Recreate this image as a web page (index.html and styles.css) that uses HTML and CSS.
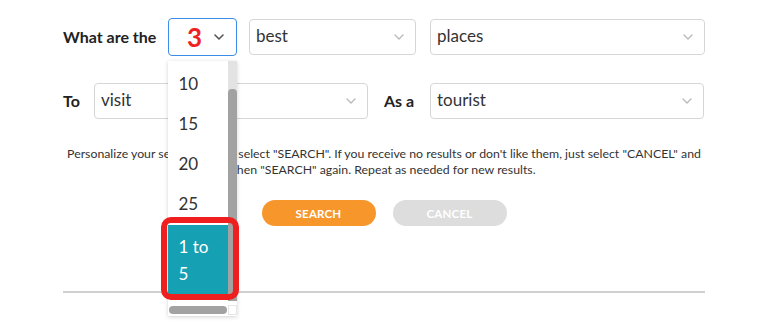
FILE: index.html
```html
<!DOCTYPE html>
<html>
<head>
<meta charset="utf-8">
<link rel="stylesheet" href="styles.css">
</head>
<body>
<div class="page">
  <div class="row row1">
    <span class="label l-what">What are the</span>
    <div class="select sel-num">
      <span class="val num">3</span>
      <svg class="chev dark" width="10" height="6" viewBox="0 0 10 6"><polyline points="1,1 5,5 9,1" fill="none" stroke="currentColor" stroke-width="1.6" stroke-linecap="round" stroke-linejoin="round"/></svg>
      <div class="dropdown">
        <div class="dd-body">
          <ul class="dd-list">
            <li>10</li>
            <li>15</li>
            <li>20</li>
            <li>25</li>
            <li class="selected">1 to 5</li>
          </ul>
          <div class="vscroll"><div class="vthumb"></div></div>
        </div>
        <div class="hscroll"><div class="hthumb"></div><div class="corner"></div></div>
        <div class="highlight"></div>
      </div>
    </div>
    <div class="select sel-best">
      <span class="val">best</span>
      <svg class="chev" width="10" height="6" viewBox="0 0 10 6"><polyline points="1,1 5,5 9,1" fill="none" stroke="currentColor" stroke-width="1.3" stroke-linecap="round" stroke-linejoin="round"/></svg>
    </div>
    <div class="select sel-places">
      <span class="val">places</span>
      <svg class="chev" width="10" height="6" viewBox="0 0 10 6"><polyline points="1,1 5,5 9,1" fill="none" stroke="currentColor" stroke-width="1.3" stroke-linecap="round" stroke-linejoin="round"/></svg>
    </div>
  </div>
  <div class="row row2">
    <span class="label l-to">To</span>
    <div class="select sel-visit">
      <span class="val">visit</span>
      <svg class="chev" width="10" height="6" viewBox="0 0 10 6"><polyline points="1,1 5,5 9,1" fill="none" stroke="currentColor" stroke-width="1.3" stroke-linecap="round" stroke-linejoin="round"/></svg>
    </div>
    <span class="label l-as">As a</span>
    <div class="select sel-tourist">
      <span class="val">tourist</span>
      <svg class="chev" width="10" height="6" viewBox="0 0 10 6"><polyline points="1,1 5,5 9,1" fill="none" stroke="currentColor" stroke-width="1.3" stroke-linecap="round" stroke-linejoin="round"/></svg>
    </div>
  </div>
  <p class="hint">Personalize your selections and select "SEARCH". If you receive no results or don't like them, just select "CANCEL" and<br>then "SEARCH" again. Repeat as needed for new results.</p>
  <div class="actions">
    <button class="btn search">SEARCH</button>
    <button class="btn cancel">CANCEL</button>
  </div>
  <div class="rule"></div>
</div>
</body>
</html>
```
FILE: styles.css
```css
* { box-sizing: border-box; }
html, body { margin: 0; padding: 0; background: #fff; }
body { font-family: Lato, "Noto Sans", sans-serif; color: #333; }
.page { width: 768px; min-height: 322px; padding: 18px 63px 30px 63px; }

.row { display: flex; align-items: center; }
.row1 { height: 38px; }
.row2 { height: 36px; margin-top: 27px; }

.label { font-weight: 700; font-size: 16px; color: #222; white-space: nowrap; flex: none; margin-top: -2px; }
.l-what { width: 105px; }
.l-to { width: 31px; }
.l-as { width: 46px; margin-left: 16px; }

.select {
  position: relative; flex: none;
  display: flex; align-items: center; justify-content: space-between;
  height: 36px; border: 1px solid #d6d6d6; border-radius: 4px;
  padding: 0 11px 0 6px; background: #fff;
}
.val { font-size: 17px; color: #333; margin-top: -3px; }
.chev { color: #b8b8b8; flex: none; }
.chev.dark { color: #555; }

.sel-num { width: 69px; height: 38px; border: 1.5px solid #3b8de6; padding: 0 12px 0 18px; }
.val.num { color: #ee2222; font-weight: 700; font-size: 26px; line-height: 1; margin-top: -1px; }
.sel-best { width: 167px; margin-left: 12px; height: 36px; }
.sel-places { width: 275px; margin-left: 14px; height: 36px; }
.sel-visit { width: 274px; }
.sel-tourist { width: 274px; }

.dropdown {
  position: absolute; left: -1.5px; top: calc(100% + 6px);
  width: 69px; height: 255px; background: #fff;
  box-shadow: 0 1px 4px rgba(0,0,0,0.18); z-index: 5;
  display: flex; flex-direction: column;
}
.dd-body { display: flex; height: 240px; }
.dd-list { list-style: none; margin: 0; padding: 2px 0 0 0; width: 60px; overflow: hidden; }
.dd-list li { height: 40px; display: flex; align-items: center; padding-left: 11px; font-size: 17px; color: #333; }
.dd-list li.selected {
  height: 70px; margin-top: 2px; background: #15a0b3; color: #fff;
  line-height: 27px; padding-right: 14px;
}
.vscroll { width: 9px; background: #e3e3e3; padding-top: 28px; }
.vthumb { height: 212px; background: #a2a2a2; border-radius: 4px 4px 0 0; }
.hscroll { display: flex; align-items: center; height: 15px; padding-top: 2px; }
.hthumb { width: 58px; height: 8px; margin-left: 1px; background: #a2a2a2; border-radius: 4px; }
.corner { width: 9px; height: 10px; margin-left: 1px; background: #fff; border: 1px solid #e6e6e6; }
.highlight {
  position: absolute; left: -7px; top: 156px; width: 78px; height: 83px;
  border: 6px solid #f01f1f; border-radius: 10px;
}

.hint {
  margin: 27px 0 0 0; font-size: 12.3px; line-height: 16px; color: #333;
  text-align: center; white-space: nowrap;
}
.actions { display: flex; justify-content: center; gap: 17px; margin-top: 22px; }
.btn {
  width: 114px; height: 26px; border: none; border-radius: 13px;
  font-family: Lato, "Noto Sans", sans-serif; font-size: 11.5px; font-weight: 700;
  color: #fff; letter-spacing: 0.2px; padding: 0;
}
.btn.search { background: #f7962b; }
.btn.cancel { background: #dddddd; }
.rule { height: 2px; background: #cfcfcf; margin-top: 65px; }
```
